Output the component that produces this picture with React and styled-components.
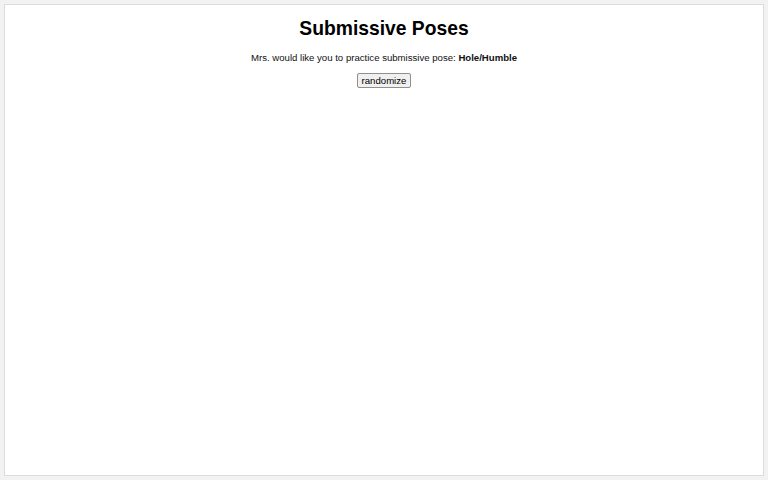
import React, { useState } from 'react'
import styled, { createGlobalStyle } from 'styled-components'

const GlobalStyle = createGlobalStyle`
  html, body {
    margin: 0;
    padding: 0;
    background: #f2f2f2;
    font-family: "Liberation Sans", Arial, sans-serif;
  }
`

const Page = styled.div`
  padding: 4px;
  height: 480px;
  box-sizing: border-box;
`

const Panel = styled.div`
  height: 472px;
  box-sizing: border-box;
  background: #fff;
  border: 1px solid #dcdcdc;
  display: flex;
  flex-direction: column;
  align-items: center;
  padding-top: 13px;
`

const Title = styled.h1`
  margin: 0;
  font-size: 19.3px;
  font-weight: bold;
  color: #000;
`

const Line = styled.p`
  margin: 12px 0 0;
  font-size: 9.6px;
  color: #111;
`

const Button = styled.button`
  margin-top: 10px;
  font-family: "Liberation Sans", Arial, sans-serif;
  font-size: 9.6px;
  padding: 1px 4px;
  background: #f0f0f0;
  border: 1px solid #8f8f8f;
  border-radius: 2px;
  color: #000;
`

const poses = ['Hole/Humble', 'Kneel', 'Present', 'Inspection', 'Wait']

const App = () => {
  const [pose, setPose] = useState(poses[0])

  return (
    <>
      <GlobalStyle />
      <Page>
        <Panel>
          <Title>Submissive Poses</Title>
          <Line>
            Mrs. would like you to practice submissive pose: <b>{pose}</b>
          </Line>
          <Button onClick={() => setPose(poses[Math.floor(Math.random() * poses.length)])}>
            randomize
          </Button>
        </Panel>
      </Page>
    </>
  )
}

export default App
